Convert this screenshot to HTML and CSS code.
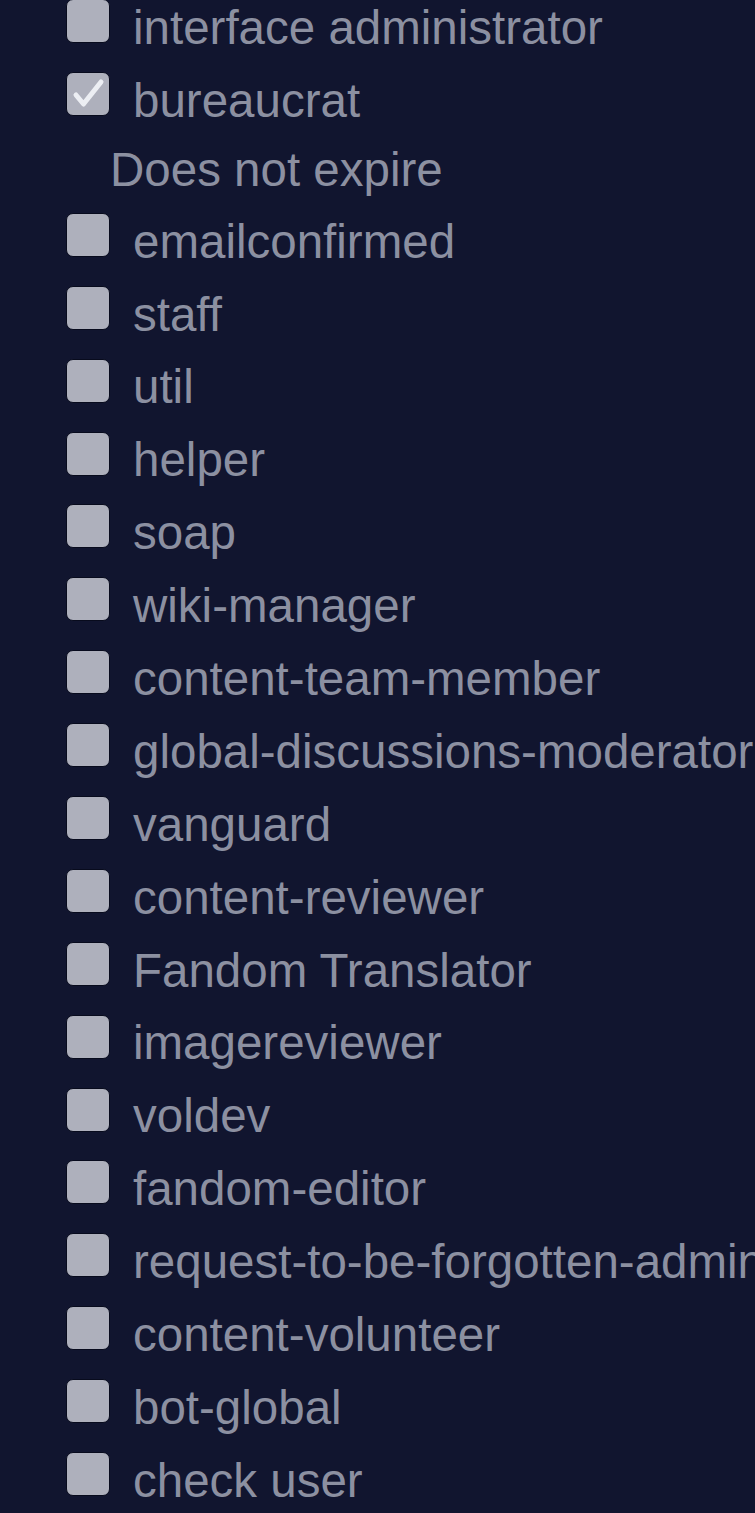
FILE: index.html
```html
<!DOCTYPE html>
<html lang="en">
<head>
<meta charset="utf-8">
<title>User groups</title>
<link rel="stylesheet" href="styles.css">
</head>
<body>
<div class="groups">
  <div class="row"><span class="box"></span><span class="label">interface administrator</span></div>
  <div class="row"><span class="box checked"><svg viewBox="0 0 44 44" width="44" height="44"><polyline points="10,23 17.5,32 35,10" fill="none" stroke="#eceef3" stroke-width="5" stroke-linecap="round" stroke-linejoin="round"/></svg></span><span class="label">bureaucrat</span></div>
  <div class="expiry">Does not expire</div>
  <div class="row"><span class="box"></span><span class="label">emailconfirmed</span></div>
  <div class="row"><span class="box"></span><span class="label">staff</span></div>
  <div class="row"><span class="box"></span><span class="label">util</span></div>
  <div class="row"><span class="box"></span><span class="label">helper</span></div>
  <div class="row"><span class="box"></span><span class="label">soap</span></div>
  <div class="row"><span class="box"></span><span class="label">wiki-manager</span></div>
  <div class="row"><span class="box"></span><span class="label">content-team-member</span></div>
  <div class="row"><span class="box"></span><span class="label">global-discussions-moderator</span></div>
  <div class="row"><span class="box"></span><span class="label">vanguard</span></div>
  <div class="row"><span class="box"></span><span class="label">content-reviewer</span></div>
  <div class="row"><span class="box"></span><span class="label">Fandom Translator</span></div>
  <div class="row"><span class="box"></span><span class="label">imagereviewer</span></div>
  <div class="row"><span class="box"></span><span class="label">voldev</span></div>
  <div class="row"><span class="box"></span><span class="label">fandom-editor</span></div>
  <div class="row"><span class="box"></span><span class="label">request-to-be-forgotten-admin</span></div>
  <div class="row"><span class="box"></span><span class="label">content-volunteer</span></div>
  <div class="row"><span class="box"></span><span class="label">bot-global</span></div>
  <div class="row"><span class="box"></span><span class="label">check user</span></div>
</div>
</body>
</html>
```
FILE: styles.css
```css
html, body {
  margin: 0;
  padding: 0;
  background: #11152f;
  overflow: hidden;
  width: 755px;
  height: 1513px;
}
.groups {
  margin-top: -10.2px;
  padding-left: 66px;
  font-family: "Liberation Sans", Arial, sans-serif;
  font-size: 47.5px;
  color: #8c90a1;
  white-space: nowrap;
}
.row {
  display: flex;
  align-items: flex-start;
  height: 72.9px;
  gap: 23px;
}
.box {
  flex: none;
  width: 42px;
  height: 42px;
  margin-top: 9.2px;
  background: #aeb0bc;
  border: 1.5px solid #080b1d;
  border-radius: 7px;
  position: relative;
  overflow: hidden;
}
.box svg {
  position: absolute;
  left: -1px;
  top: -1px;
}
.label {
  line-height: 72.9px;
  padding-top: 2px;
}
.expiry {
  padding-left: 44px;
  line-height: 65px;
  padding-top: 1px;
  padding-bottom: 2.1px;
}
```
